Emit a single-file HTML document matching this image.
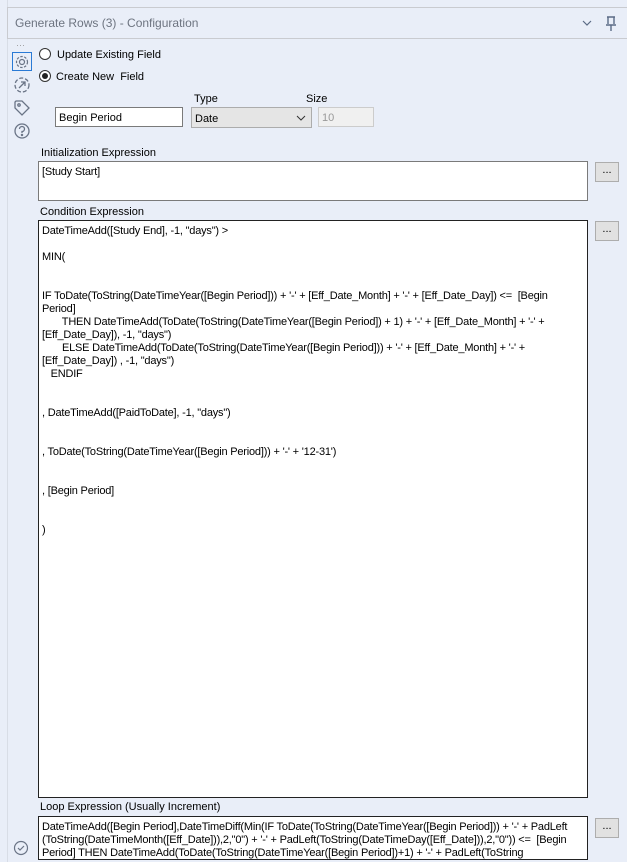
<!DOCTYPE html>
<html><head><style>
body{margin:0;width:627px;height:862px;background:#e9eef8;font-family:"Liberation Sans",sans-serif;font-size:11px;color:#000;position:relative;overflow:hidden}
.a{position:absolute}
.hdr{left:7px;top:7px;width:619px;height:30px;border:1px solid #c9cbd0;background:#e9eef8}
.hdr span{position:absolute;left:7px;top:8px;font-size:12px;color:#6d7480}
.ta{background:#fff;border:1px solid #7a7a7a;box-sizing:border-box;white-space:pre;line-height:13px;padding:4px 3px 2px;font-size:11px;letter-spacing:-0.2px;overflow:hidden}
.btn{width:24px;height:20px;border:1px solid #adadad;background:#e1e1e1;box-sizing:border-box;text-align:center;font-size:11px;line-height:14px}
.lbl{font-size:11px}
.radio{width:12px;height:12px;border:1px solid #333;border-radius:50%;background:#fff;box-sizing:border-box}
</style></head><body>
<div class="a" style="left:7px;top:0;width:1px;height:862px;background:#d8dde6"></div>
<div class="a hdr"><span>Generate Rows (3) - Configuration</span>
<svg class="a" style="left:573px;top:10px" width="12" height="10"><path d="M2 3 L6 7 L10 3" fill="none" stroke="#5a6a85" stroke-width="1.2"/></svg>
<svg class="a" style="left:595px;top:7px" width="16" height="18"><path d="M4 2 H12 M5 2 V9 M11 2 V9 M3 10 H13 M8 10 V16" fill="none" stroke="#5a6a85" stroke-width="1.4"/></svg>
</div>
<div class="a" style="left:16px;top:40px;font-size:9px;color:#999">···</div>
<div class="a" style="left:12px;top:52px;width:20px;height:19px;border:1px solid #2a7ad5;box-sizing:border-box"></div>
<svg class="a" style="left:13px;top:53px" width="18" height="18" fill="none" stroke="#6a7486" stroke-width="1.2"><circle cx="9" cy="9" r="2.5"/><circle cx="9" cy="9" r="5.5" stroke-dasharray="2.5 1.5"/></svg>
<svg class="a" style="left:13px;top:76px" width="18" height="18" fill="none" stroke="#6a7486" stroke-width="1.3"><circle cx="9" cy="9" r="7" stroke-dasharray="4 2"/><path d="M6 12 L12 6 M8 6 H12 V10"/></svg>
<svg class="a" style="left:13px;top:99px" width="18" height="18" fill="none" stroke="#6a7486" stroke-width="1.3"><path d="M2 3 V9 L9 16 L16 9 L9 2 H3 Z"/><circle cx="6" cy="6" r="1.2"/></svg>
<svg class="a" style="left:13px;top:122px" width="18" height="18" fill="none" stroke="#6a7486" stroke-width="1.3"><circle cx="9" cy="9" r="7"/><path d="M6.5 7 A2.5 2.5 0 1 1 9 9.5 V11"/><circle cx="9" cy="13" r="0.6" fill="#6a7486"/></svg>
<svg class="a" style="left:13px;top:840px" width="16" height="16" fill="none" stroke="#6a7486" stroke-width="1.2"><circle cx="8" cy="8" r="6.5"/><path d="M5 8 L7 10 L11 6"/></svg>

<div class="a radio" style="left:39px;top:48px"></div>
<div class="a lbl" style="left:57px;top:49px">Update Existing Field</div>
<div class="a radio" style="left:39px;top:70px"></div>
<div class="a" style="left:42px;top:73px;width:6px;height:6px;border-radius:50%;background:#222"></div>
<div class="a lbl" style="left:56px;top:71px">Create New&nbsp; Field</div>
<div class="a lbl" style="left:194px;top:93px">Type</div>
<div class="a lbl" style="left:306px;top:93px">Size</div>
<div class="a" style="left:55px;top:107px;width:128px;height:20px;border:1px solid #7a7a7a;background:#fff;box-sizing:border-box;padding:4px 3px 0">Begin Period</div>
<div class="a" style="left:191px;top:107px;width:121px;height:21px;border:1px solid #acacac;background:#e5e5e5;box-sizing:border-box;padding:5px 3px 0">Date
<svg class="a" style="left:104px;top:6px" width="10" height="8"><path d="M1 2 L5 6 L9 2" fill="none" stroke="#333" stroke-width="1"/></svg></div>
<div class="a" style="left:318px;top:107px;width:56px;height:20px;border:1px solid #ccc;background:#f0f0f0;box-sizing:border-box;padding:4px 3px 0;color:#999">10</div>

<div class="a lbl" style="left:41px;top:147px">Initialization Expression</div>
<div class="a ta" style="left:38px;top:161px;width:550px;height:40px">[Study Start]</div>
<div class="a btn" style="left:595px;top:162px">...</div>

<div class="a lbl" style="left:40px;top:206px">Condition Expression</div>
<div class="a ta" style="left:38px;top:220px;width:550px;height:578px;border-color:#222">DateTimeAdd([Study End], -1, "days") >

MIN(


IF ToDate(ToString(DateTimeYear([Begin Period])) + '-' + [Eff_Date_Month] + '-' + [Eff_Date_Day]) &lt;=  [Begin
Period]
       THEN DateTimeAdd(ToDate(ToString(DateTimeYear([Begin Period]) + 1) + '-' + [Eff_Date_Month] + '-' +
[Eff_Date_Day]), -1, "days")
       ELSE DateTimeAdd(ToDate(ToString(DateTimeYear([Begin Period])) + '-' + [Eff_Date_Month] + '-' +
[Eff_Date_Day]) , -1, "days")
   ENDIF


, DateTimeAdd([PaidToDate], -1, "days")


, ToDate(ToString(DateTimeYear([Begin Period])) + '-' + '12-31')


, [Begin Period]


)</div>
<div class="a btn" style="left:595px;top:221px">...</div>

<div class="a lbl" style="left:40px;top:801px">Loop Expression (Usually Increment)</div>
<div class="a ta" style="left:38px;top:816px;width:550px;height:44px;border-color:#222;padding-top:4px">DateTimeAdd([Begin Period],DateTimeDiff(Min(IF ToDate(ToString(DateTimeYear([Begin Period])) + '-' + PadLeft
(ToString(DateTimeMonth([Eff_Date])),2,"0") + '-' + PadLeft(ToString(DateTimeDay([Eff_Date])),2,"0")) &lt;=  [Begin
Period] THEN DateTimeAdd(ToDate(ToString(DateTimeYear([Begin Period])+1) + '-' + PadLeft(ToString</div>
<div class="a btn" style="left:595px;top:818px">...</div>
</body></html>
